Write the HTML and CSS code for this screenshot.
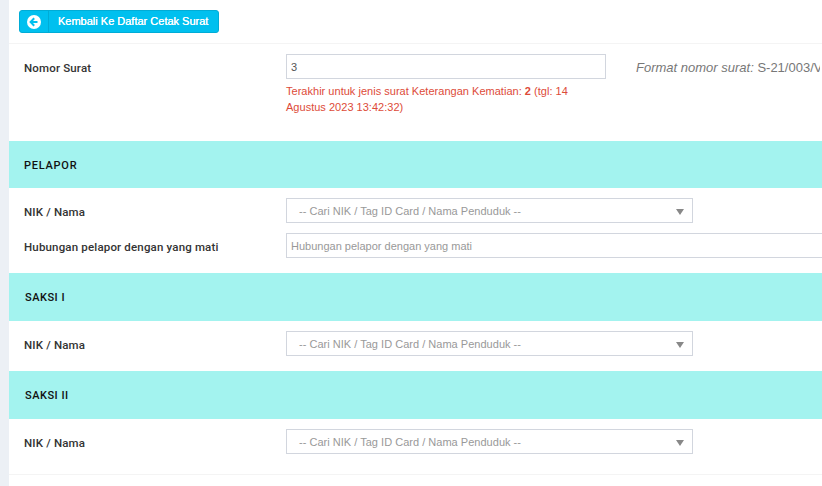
FILE: index.html
```html
<!DOCTYPE html>
<html lang="en">
<head>
    <meta charset="UTF-8">
    <meta name="viewport" content="width=device-width, initial-scale=1.0">
    <title>Cetak Surat</title>
    <link rel="stylesheet" href="styles.css">
</head>
<body>
    <div class="content">
        <div class="toolbar">
            <a class="btn-back" href="#">
                <span class="btn-icon">
                    <svg width="14" height="14" viewBox="0 0 14 14">
                        <circle cx="7" cy="7" r="7" fill="#fff"/>
                        <path d="M7.2 3.2 3.6 7l3.6 3.8M3.9 7h6.6" fill="none" stroke="#00c0ef" stroke-width="2"/>
                    </svg>
                </span>
                <span class="btn-label">Kembali Ke Daftar Cetak Surat</span>
            </a>
        </div>

        <form class="form">
            <div class="row row-nomor">
                <label class="row-label">Nomor Surat</label>
                <div class="nomor-field">
                    <input class="input" type="text" value="3">
                    <p class="nomor-hint">Terakhir untuk jenis surat Keterangan Kematian: <b>2</b> (tgl: 14 Agustus 2023 13:42:32)</p>
                </div>
                <div class="nomor-format"><i>Format nomor surat:</i> S-21/003/VIII/2023</div>
            </div>

            <h4 class="band band-pelapor">PELAPOR</h4>
            <div class="row row-first">
                <label class="row-label">NIK / Nama</label>
                <div class="select">-- Cari NIK / Tag ID Card / Nama Penduduk --<span class="caret"></span></div>
            </div>
            <div class="row row-next">
                <label class="row-label">Hubungan pelapor dengan yang mati</label>
                <input class="input input-wide" type="text" placeholder="Hubungan pelapor dengan yang mati">
            </div>

            <h4 class="band band-saksi1">SAKSI I</h4>
            <div class="row row-first">
                <label class="row-label">NIK / Nama</label>
                <div class="select">-- Cari NIK / Tag ID Card / Nama Penduduk --<span class="caret"></span></div>
            </div>

            <h4 class="band band-saksi2">SAKSI II</h4>
            <div class="row row-first row-last">
                <label class="row-label">NIK / Nama</label>
                <div class="select">-- Cari NIK / Tag ID Card / Nama Penduduk --<span class="caret"></span></div>
            </div>
        </form>
    </div>
</body>
</html>
```

FILE: styles.css
```css
html, body {
    height: 100%;
}
body {
    margin: 0;
    background-color: #ecf0f5;
    font-family: "Liberation Sans", Arial, sans-serif;
    font-size: 12px;
    color: #333;
    overflow: hidden;
}
.content {
    margin-left: 9px;
    min-height: 100%;
    background-color: #fff;
    overflow: hidden;
}
.toolbar {
    height: 33px;
    padding: 10px 0 0 10px;
    border-bottom: 1px solid #f4f4f4;
}
.btn-back {
    display: inline-flex;
    width: 200px;
    height: 23px;
    box-sizing: border-box;
    border: 1px solid #00acd6;
    border-radius: 3px;
    background-color: #00c0ef;
    color: #fff;
    font-size: 11px;
    text-decoration: none;
    text-shadow: 0 0 0 #fff;
}
.btn-icon {
    width: 28px;
    border-right: 1px solid #00acd6;
    display: flex;
    align-items: center;
    justify-content: center;
}
.btn-label {
    padding-left: 9px;
    line-height: 21px;
    white-space: nowrap;
}
.row {
    display: flex;
    width: 900px;
    padding-left: 15px;
}
.row-label {
    width: 262px;
    flex: none;
    font-family: Roboto, "Liberation Sans", sans-serif;
    font-size: 11.5px;
    font-weight: 500;
    letter-spacing: 0.17px;
    line-height: 29px;
    color: #333;
}
.row-nomor {
    height: 97px;
    padding-top: 10px;
    box-sizing: border-box;
}
.nomor-field {
    width: 320px;
    flex: none;
}
.nomor-hint {
    margin: 4px 0 0;
    width: 296px;
    font-size: 11px;
    letter-spacing: 0.02px;
    line-height: 16px;
    color: #dd4b39;
}
.nomor-format {
    width: 184px;
    margin-left: 30px;
    overflow: hidden;
    line-height: 27px;
    font-size: 13px;
    color: #777;
    white-space: nowrap;
}
.input {
    display: block;
    width: 320px;
    height: 25px;
    padding: 0 4px;
    box-sizing: border-box;
    border: 1px solid #d2d6de;
    font-family: "Liberation Sans", Arial, sans-serif;
    font-size: 11px;
    color: #555;
    outline: none;
}
.input::placeholder {
    color: #999;
    opacity: 1;
}
.input-wide {
    width: 600px;
}
.band {
    margin: 0;
    height: 47px;
    padding-left: 15px;
    background-color: #a3f3ef;
    font-family: Roboto, "Liberation Sans", sans-serif;
    font-size: 11px;
    font-weight: 500;
    letter-spacing: 0.5px;
    line-height: 50px;
    color: #111;
}
.band-pelapor {
    letter-spacing: 0.75px;
}
.band-saksi1, .band-saksi2 {
    height: 48px;
    padding-left: 16px;
}
.select {
    position: relative;
    width: 407px;
    height: 25px;
    padding-left: 12px;
    box-sizing: border-box;
    border: 1px solid #d2d6de;
    font-size: 11px;
    letter-spacing: 0.02px;
    line-height: 25px;
    color: #999;
}
.caret {
    position: absolute;
    top: 10px;
    right: 8px;
    border-top: 6px solid #888;
    border-left: 4px solid transparent;
    border-right: 4px solid transparent;
}
.row-first {
    padding-top: 10px;
    height: 25px;
}
.row-next {
    padding-top: 10px;
    height: 25px;
    padding-bottom: 15px;
}
.band-saksi2 {
    margin-top: 15px;
}
.row-last {
    height: 45px;
    border-bottom: 1px solid #f4f4f4;
}
```
